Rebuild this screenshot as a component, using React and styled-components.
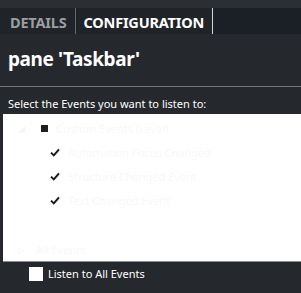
import React from 'react';
import styled, { createGlobalStyle } from 'styled-components';

const GlobalStyle = createGlobalStyle`
  html, body {
    margin: 0;
    padding: 0;
    background: #25282c;
  }
  body {
    font-family: 'Noto Sans', 'Open Sans', sans-serif;
  }
`;

const Pane = styled.div`
  width: 301px;
  height: 293px;
  display: flex;
  flex-direction: column;
  background: #25282c;
  overflow: hidden;
`;

const TopStrip = styled.div`
  height: 8px;
  flex-shrink: 0;
  background: #2b2e32;
`;

const TabBar = styled.div`
  height: 26px;
  flex-shrink: 0;
  display: flex;
  background: #1b2026;
`;

const TabGroup = styled.div`
  display: flex;
  background: #202428;
`;

const Tab = styled.div`
  display: flex;
  align-items: center;
  padding: 1px ${(p) => (p.$active ? '8px' : '9px')} 0 ${(p) => (p.$active ? '7px' : '10px')};
  font-size: 14.5px;
  font-weight: 700;
  letter-spacing: -0.2px;
  color: ${(p) => (p.$active ? '#ffffff' : '#9b9ea2')};
  border-right: 1px solid ${(p) => (p.$active ? '#d6d6d6' : '#64676b')};
`;

const Title = styled.h1`
  margin: 0;
  padding: 12px 8px 0;
  height: 53px;
  flex-shrink: 0;
  box-sizing: border-box;
  font-size: 19px;
  font-weight: 700;
  color: #ffffff;
  line-height: 26px;
  letter-spacing: -0.4px;
  border-bottom: 1px solid #73777c;
`;

const Prompt = styled.div`
  padding: 9px 8px 0;
  height: 27px;
  flex-shrink: 0;
  box-sizing: border-box;
  font-size: 11px;
  color: #ffffff;
  line-height: 16px;
`;

const ListBox = styled.div`
  margin-left: 3px;
  height: 145px;
  flex-shrink: 0;
  background: #ffffff;
  border-bottom: 1px solid #8a8d91;
  display: flex;
  flex-direction: column;
  padding-top: 2px;
`;

const Row = styled.div`
  height: 24px;
  display: flex;
  align-items: center;
  padding-left: ${(p) => p.$indent}px;
  gap: 8px;
  font-size: 11px;
  color: #f8f8f8;
`;

const Expander = styled.span`
  width: 10px;
  font-size: 9px;
  color: #f6f6f6;
`;

const Square = styled.span`
  width: 7px;
  height: 7px;
  background: #1e1e1e;
  margin-left: 5px;
`;

const Spacer = styled.div`
  flex: 1;
`;

const Footer = styled.label`
  display: flex;
  align-items: center;
  gap: 5px;
  padding: 4px 0 0 29px;
  font-size: 11px;
  color: #ffffff;
`;

const Box = styled.span`
  width: 14px;
  height: 14px;
  background: #ffffff;
`;

const Check = () => (
  <svg width="10" height="9" viewBox="0 0 10 9">
    <path d="M1 4.6 L3.8 7.4 L9 1.4" fill="none" stroke="#1a1a1a" strokeWidth="2" />
  </svg>
);

const events = ['Automation Focus Changed', 'Structure Changed Event', 'Text Changed Event'];

const App = () => (
  <>
    <GlobalStyle />
    <Pane>
      <TopStrip />
      <TabBar>
        <TabGroup>
          <Tab>DETAILS</Tab>
          <Tab $active>CONFIGURATION</Tab>
        </TabGroup>
      </TabBar>
      <Title>pane 'Taskbar'</Title>
      <Prompt>Select the Events you want to listen to:</Prompt>
      <ListBox>
        <Row $indent={15}>
          <Expander>◢</Expander>
          <Square />
          <span>Custom Events (Level)</span>
        </Row>
        {events.map((e) => (
          <Row key={e} $indent={47}>
            <Check />
            <span>{e}</span>
          </Row>
        ))}
        <Spacer />
        <Row $indent={15}>
          <Expander>▷</Expander>
          <span>All Events</span>
        </Row>
      </ListBox>
      <Footer>
        <Box />
        Listen to All Events
      </Footer>
    </Pane>
  </>
);

export default App;
